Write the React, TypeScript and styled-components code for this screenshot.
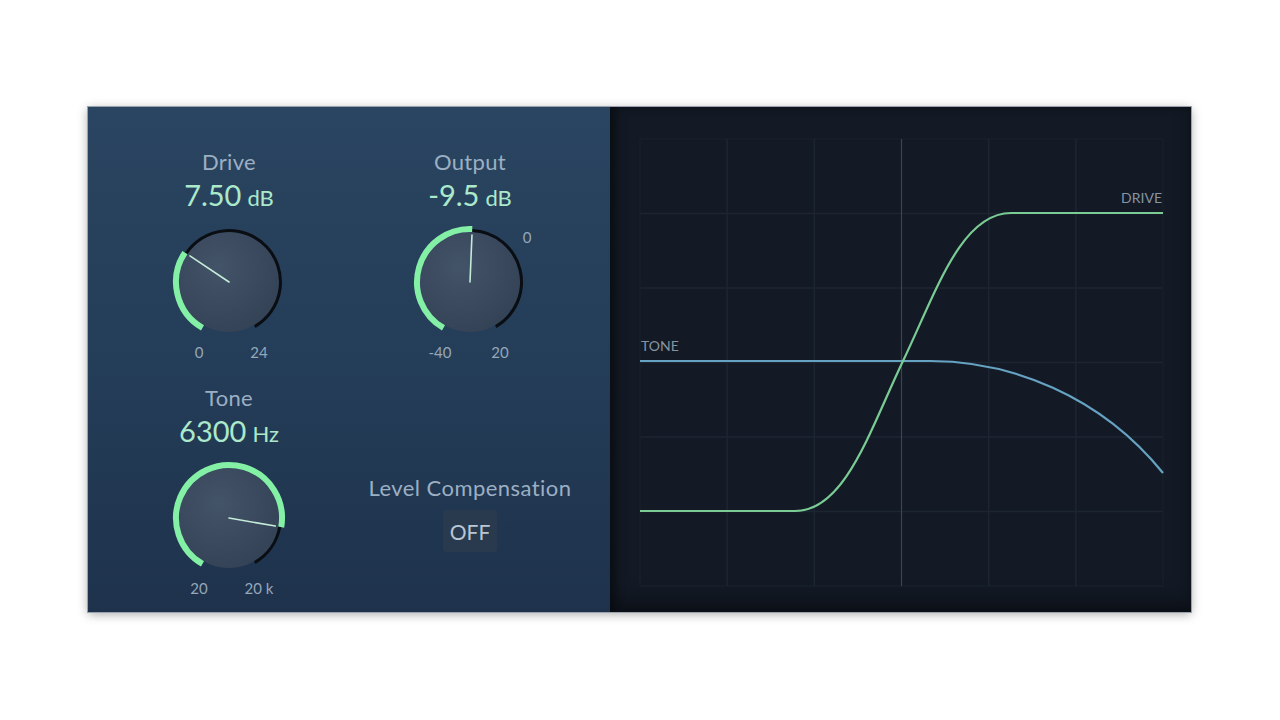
import React from 'react';
import styled, { createGlobalStyle } from 'styled-components';

const GlobalStyle = createGlobalStyle`
  html, body {
    margin: 0;
    padding: 0;
    background: #ffffff;
  }
  body {
    font-family: 'Lato', 'Open Sans', sans-serif;
  }
`;

const Stage = styled.div`
  width: 1280px;
  height: 720px;
  box-sizing: border-box;
  padding: 107px 0 0 88px;
  background: #ffffff;
`;

const Panel = styled.div`
  width: 1103px;
  height: 505px;
  display: flex;
  box-shadow: 0 0 0 1px #9aa3ad, 0 2px 10px rgba(0, 0, 0, 0.35);
`;

const ControlSection = styled.div`
  width: 522px;
  box-sizing: border-box;
  padding-top: 43px;
  display: grid;
  grid-template-columns: 282px 200px;
  grid-template-rows: 236px 1fr;
  background: linear-gradient(180deg, #2a4561 0%, #243d58 50%, #1e324c 100%);
`;

const ChartSection = styled.div`
  flex: 1;
  background: #131a25;
  box-shadow: inset 6px 0 10px rgba(0, 0, 0, 0.35), inset 0 -14px 18px rgba(0, 0, 0, 0.3);
`;

const KnobBlock = styled.div`
  display: flex;
  flex-direction: column;
  align-items: center;
`;

const Title = styled.div`
  font-size: 22px;
  line-height: 24px;
  letter-spacing: 0.3px;
  color: #9cafc3;
`;

const Value = styled.div`
  margin-top: 5px;
  font-size: 29px;
  line-height: 32px;
  color: #ace9cb;
`;

const Unit = styled.span`
  font-size: 22px;
  margin-left: 6px;
`;

const Dial = styled.div`
  position: relative;
  width: 130px;
  height: 130px;
  margin-top: 3px;
`;

const ScaleRow = styled.div`
  width: 104px;
  margin-top: -3px;
  display: flex;
  justify-content: space-between;
`;

const ScaleLabel = styled.span`
  width: 44px;
  text-align: center;
  font-size: 15px;
  line-height: 16px;
  color: #95a7b9;
`;

const CornerLabel = styled.span`
  position: absolute;
  left: 122px;
  top: 20px;
  transform: translate(-50%, -50%);
  font-size: 15px;
  color: #95a7b9;
`;

const SwitchBlock = styled.div`
  grid-column: 2;
  grid-row: 2;
  padding-top: 90px;
  display: flex;
  flex-direction: column;
  align-items: center;
`;

const SwitchTitle = styled.div`
  font-size: 22px;
  line-height: 24px;
  letter-spacing: 0.45px;
  white-space: nowrap;
  color: #9cafc3;
`;

const OffButton = styled.div`
  margin-top: 10px;
  width: 54px;
  height: 42px;
  border-radius: 3px;
  background: #293a4f;
  display: flex;
  align-items: center;
  justify-content: center;
  font-size: 21px;
  line-height: 1;
  color: #bac6d3;
`;

const C = 65;
const START = -150;
const END = 150;

const polar = (r: number, deg: number) => {
  const rad = (deg * Math.PI) / 180;
  return [C + r * Math.sin(rad), C - r * Math.cos(rad)];
};

const arc = (r: number, a0: number, a1: number) => {
  const [x0, y0] = polar(r, a0);
  const [x1, y1] = polar(r, a1);
  const large = a1 - a0 > 180 ? 1 : 0;
  return `M${x0} ${y0} A${r} ${r} 0 ${large} 1 ${x1} ${y1}`;
};

type KnobProps = {
  id: string;
  title: string;
  value: string;
  unit: string;
  position: number;
  min: string;
  max: string;
  corner?: string;
};

function Knob({ id, title, value, unit, position, min, max, corner }: KnobProps) {
  const angle = START + position * (END - START);
  const [px, py] = polar(47, angle);
  return (
    <KnobBlock>
      <Title>{title}</Title>
      <Value>
        {value}
        <Unit>{unit}</Unit>
      </Value>
      <Dial>
        <svg width="130" height="130" viewBox="0 0 130 130">
          <defs>
            <radialGradient id={id} cx="40%" cy="35%" r="70%">
              <stop offset="0%" stopColor="#435368" />
              <stop offset="100%" stopColor="#344256" />
            </radialGradient>
          </defs>
          <circle cx={C} cy={C} r="50" fill={`url(#${id})`} />
          <path d={arc(51.5, angle, END)} fill="none" stroke="#0a0e13" strokeWidth="3" />
          <path d={arc(53, START, angle)} fill="none" stroke="#84f0a6" strokeWidth="6" />
          <line x1={C} y1={C} x2={px} y2={py} stroke="#c4ecd9" strokeWidth="1.6" strokeLinecap="round" />
        </svg>
        {corner && <CornerLabel>{corner}</CornerLabel>}
      </Dial>
      <ScaleRow>
        <ScaleLabel>{min}</ScaleLabel>
        <ScaleLabel>{max}</ScaleLabel>
      </ScaleRow>
    </KnobBlock>
  );
}

const GX0 = 30;
const GY0 = 32;
const CW = 87.17;
const RH = 74.5;

function TransferChart() {
  const cols = Array.from({ length: 7 }, (_, i) => GX0 + i * CW);
  const rows = Array.from({ length: 7 }, (_, i) => GY0 + i * RH);
  return (
    <svg width="581" height="505" viewBox="0 0 581 505" style={{ display: 'block' }}>
      {rows.map((y, i) => (
        <line
          key={`r${i}`}
          x1={GX0}
          x2={GX0 + 6 * CW}
          y1={y}
          y2={y}
          stroke={i === 0 || i === 6 ? '#172029' : '#1c2632'}
          strokeWidth="1.5"
        />
      ))}
      {cols.map((x, i) => (
        <line
          key={`c${i}`}
          x1={x}
          x2={x}
          y1={GY0}
          y2={GY0 + 6 * RH}
          stroke={i === 3 ? '#394553' : i === 0 || i === 6 ? '#172029' : '#1c2632'}
          strokeWidth={i === 3 ? 1.2 : 1.5}
        />
      ))}
      <path
        d="M30 254 L320 254 C400 254 490 288 553 366"
        fill="none"
        stroke="#66a2c2"
        strokeWidth="2.2"
      />
      <path
        d="M30 404 L185 404 C235 404 260 323 293 254 C326 185 351 106 401 106 L553 106"
        fill="none"
        stroke="#7acb94"
        strokeWidth="2.2"
      />
      <text x="552" y="96" textAnchor="end" fontSize="14" fill="#8693a2" fontFamily="Lato, sans-serif">
        DRIVE
      </text>
      <text x="31" y="244" fontSize="14" fill="#8693a2" fontFamily="Lato, sans-serif">
        TONE
      </text>
    </svg>
  );
}

export default function App() {
  return (
    <>
      <GlobalStyle />
      <Stage>
        <Panel>
          <ControlSection>
            <Knob id="drive" title="Drive" value="7.50" unit="dB" position={0.3125} min="0" max="24" />
            <Knob id="output" title="Output" value="-9.5" unit="dB" position={0.508} min="-40" max="20" corner="0" />
            <Knob id="tone" title="Tone" value="6300" unit="Hz" position={0.833} min="20" max="20 k" />
            <SwitchBlock>
              <SwitchTitle>Level Compensation</SwitchTitle>
              <OffButton>OFF</OffButton>
            </SwitchBlock>
          </ControlSection>
          <ChartSection>
            <TransferChart />
          </ChartSection>
        </Panel>
      </Stage>
    </>
  );
}
